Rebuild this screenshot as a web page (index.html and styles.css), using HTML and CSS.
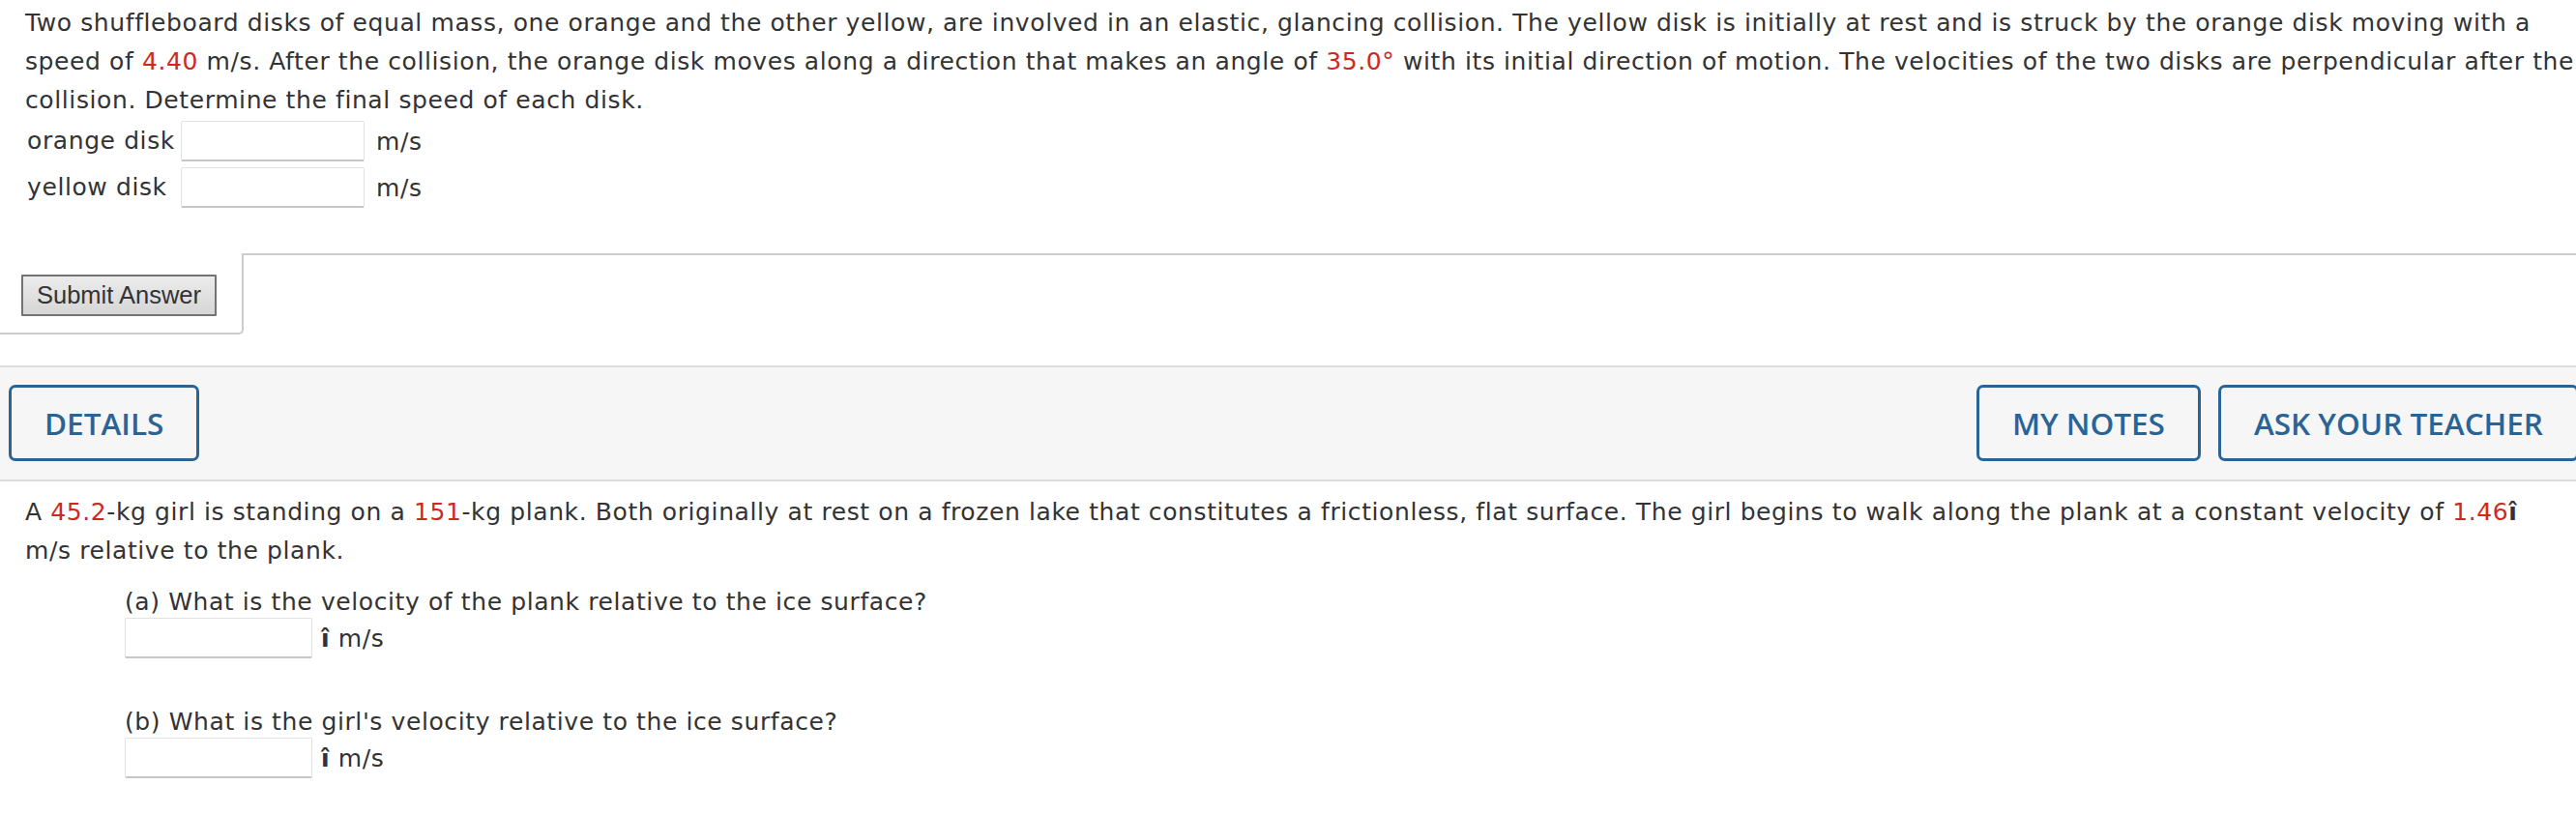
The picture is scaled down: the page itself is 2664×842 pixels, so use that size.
FILE: index.html
```html
<!DOCTYPE html>
<html>
<head>
<meta charset="utf-8">
<link rel="stylesheet" href="styles.css">
</head>
<body>
<div class="q1">
  <p class="stmt">Two shuffleboard disks of equal mass, one orange and the other yellow, are involved in an elastic, glancing collision. The yellow disk is initially at rest and is struck by the orange disk moving with a speed of <span class="num">4.40</span> m/s. After the collision, the orange disk moves along a direction that makes an angle of <span class="num">35.0°</span> with its initial direction of motion. The velocities of the two disks are perpendicular after the collision. Determine the final speed of each disk.</p>
  <div class="answers">
    <div class="row"><span class="lbl">orange disk</span><input class="field" type="text"><span class="unit">m/s</span></div>
    <div class="row"><span class="lbl">yellow disk</span><input class="field" type="text"><span class="unit">m/s</span></div>
  </div>
</div>
<div class="submit-wrap">
  <div class="submit-left"><button class="submit-btn" type="button">Submit Answer</button></div>
  <div class="submit-right"></div>
</div>
<div class="band">
  <button class="pill" type="button">DETAILS</button>
  <div class="band-spacer"></div>
  <button class="pill" type="button">MY NOTES</button>
  <button class="pill pill-last" type="button">ASK YOUR TEACHER</button>
</div>
<div class="q2">
  <p class="stmt">A <span class="num">45.2</span>-kg girl is standing on a <span class="num">151</span>-kg plank. Both originally at rest on a frozen lake that constitutes a frictionless, flat surface. The girl begins to walk along the plank at a constant velocity of <span class="num">1.46</span><b class="ihat">î</b> m/s relative to the plank.</p>
  <div class="part">
    <div class="ptext">(a) What is the velocity of the plank relative to the ice surface?</div>
    <div class="prow"><input class="field field2" type="text"><span class="unit2"><b class="ihat">î</b> m/s</span></div>
  </div>
  <div class="part part-b">
    <div class="ptext">(b) What is the girl's velocity relative to the ice surface?</div>
    <div class="prow"><input class="field field2" type="text"><span class="unit2"><b class="ihat">î</b> m/s</span></div>
  </div>
</div>
</body>
</html>
```
FILE: styles.css
```css
html, body {
  margin: 0;
  padding: 0;
  overflow: hidden;
  background: #ffffff;
}
body {
  font-family: "DejaVu Sans", Verdana, sans-serif;
  font-size: 25px;
  letter-spacing: 0.6px;
  color: #333333;
  width: 2664px;
}
.stmt {
  margin: 0;
  line-height: 40px;
}
.num {
  color: #cc2a20;
}
.ihat {
  font-weight: bold;
  color: #333333;
}
.q1 {
  padding: 4px 0 0 26px;
}
.answers {
  display: flex;
  flex-direction: column;
}
.row {
  display: flex;
  align-items: center;
  padding: 1px 0 5px 0;
}
.lbl {
  width: 161px;
  padding-left: 2px;
  box-sizing: border-box;
  line-height: 42px;
}
.field {
  box-sizing: border-box;
  width: 190px;
  height: 42px;
  margin: 0;
  padding: 0;
  border: 1px solid #e2e2e2;
  border-bottom: 2px solid #c6c6c6;
  border-radius: 2px;
  background: #ffffff;
}
.unit {
  margin-left: 12px;
}
.submit-wrap {
  display: flex;
  margin-top: 42px;
}
.submit-left {
  box-sizing: border-box;
  width: 252px;
  height: 84px;
  padding: 22px 0 0 22px;
  border-right: 2px solid #cccccc;
  border-bottom: 2px solid #cccccc;
  border-bottom-right-radius: 5px;
}
.submit-right {
  flex: 1;
  border-top: 2px solid #cccccc;
}
.submit-btn {
  box-sizing: border-box;
  width: 202px;
  height: 43px;
  margin: 0;
  padding: 0;
  font-family: "Liberation Sans", Arial, sans-serif;
  font-size: 25.5px;
  letter-spacing: 0;
  color: #333333;
  background: linear-gradient(#ececec, #d6d6d6);
  border: 2px solid #737373;
  border-radius: 1px;
}
.band {
  display: flex;
  align-items: center;
  margin-top: 32px;
  padding: 18px 0 19px 9px;
  background: #f6f6f6;
  border-top: 2px solid #dddddd;
  border-bottom: 2px solid #dddddd;
  overflow: hidden;
}
.band-spacer {
  flex: 1;
}
.pill {
  box-sizing: border-box;
  height: 79px;
  margin: 0;
  padding: 0 34px;
  font-family: "Open Sans", sans-serif;
  font-weight: 600;
  font-size: 31.5px;
  letter-spacing: 0;
  color: #2a6496;
  background: #f6f6f6;
  border: 3px solid #2a6496;
  border-radius: 7px;
  white-space: nowrap;
}
.pill-last {
  margin-left: 18px;
  margin-right: -3px;
  flex-shrink: 0;
}
.q2 {
  margin-top: 12px;
  padding: 0 14px 0 26px;
}
.part {
  margin-top: 17px;
  padding-left: 103px;
}
.part-b {
  margin-top: 50px;
}
.ptext {
  line-height: 32px;
}
.prow {
  display: flex;
  align-items: center;
  height: 42px;
}
.field2 {
  width: 194px;
}
.unit2 {
  margin-left: 9px;
}
```
